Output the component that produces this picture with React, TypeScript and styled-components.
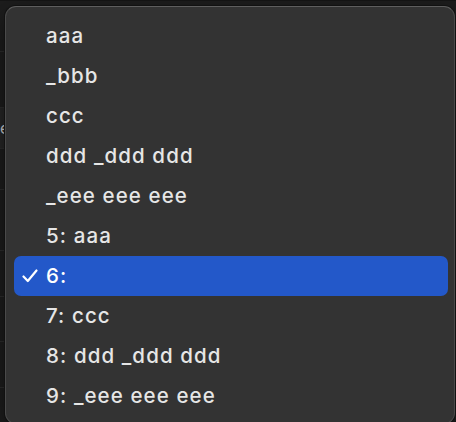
import styled, { createGlobalStyle } from "styled-components";

const GlobalStyle = createGlobalStyle`
  html, body {
    margin: 0;
    padding: 0;
    background: #1d1d1d;
  }
  body {
    font-family: Inter, "Noto Sans", "Liberation Sans", sans-serif;
  }
`;

const Screen = styled.div`
  position: relative;
  width: 456px;
  height: 422px;
  overflow: hidden;
  background: #1d1d1d;
`;

// the window behind the popup, only a sliver shows on the left
const Backdrop = styled.div`
  display: flex;
  flex-direction: column;
  width: 100%;
  height: 100%;
  padding-top: 14px;
  box-sizing: border-box;
  border-top: 1px solid #151515;
`;
const BackRow = styled.div<{ $h: number; $light?: boolean }>`
  height: ${(p) => p.$h}px;
  border-bottom: 1px solid #2c2c2c;
  background: ${(p) => (p.$light ? "#262626" : "transparent")};
  color: #cfcfcf;
  font-size: 16px;
  line-height: ${(p) => p.$h}px;
`;

const Menu = styled.div`
  position: absolute;
  left: 5px;
  top: 6px;
  width: 450px;
  height: 418px;
  box-sizing: border-box;
  padding: 9px 6px 0 8px;
  background: #333333;
  border: 1px solid #4a4a4a;
  border-top-color: #5e5e5e;
  border-radius: 11px;
  box-shadow: 0 0 0 1px #111, 0 8px 24px rgba(0, 0, 0, 0.5);
  display: flex;
  flex-direction: column;
`;

const Item = styled.div<{ $selected?: boolean }>`
  position: relative;
  height: 40px;
  display: flex;
  align-items: center;
  padding-left: 32px;
  padding-bottom: 1px;
  box-sizing: border-box;
  border-radius: 7px;
  background: ${(p) => (p.$selected ? "#2358c9" : "transparent")};
  color: ${(p) => (p.$selected ? "#ffffff" : "#e6e6e6")};
  font-size: 20.5px;
  font-weight: 500;
  letter-spacing: 1.1px;
  white-space: pre;
`;

const Check = styled.svg`
  position: absolute;
  left: 8px;
  top: 13px;
  width: 16px;
  height: 14px;
`;

const items = [
  "aaa",
  "_bbb",
  "ccc",
  "ddd _ddd ddd",
  "_eee eee eee",
  "5: aaa",
  "6:",
  "7: ccc",
  "8: ddd _ddd ddd",
  "9: _eee eee eee",
];

export default function App() {
  const selected = 6;
  return (
    <>
      <GlobalStyle />
      <Screen>
        <Backdrop>
          <BackRow $h={36} />
          <BackRow $h={55} />
          <BackRow $h={40} $light>
            e
          </BackRow>
          <BackRow $h={40} />
          <BackRow $h={60} />
          <BackRow $h={45} />
          <BackRow $h={44} />
          <BackRow $h={45} />
        </Backdrop>
        <Menu>
          {items.map((label, i) => (
            <Item key={i} $selected={i === selected}>
              {i === selected ? (
                <Check viewBox="0 0 16 14">
                  <path
                    d="M1.5 7.5 L5.8 12 L14.5 1.5"
                    fill="none"
                    stroke="#fff"
                    strokeWidth="2.2"
                    strokeLinecap="round"
                    strokeLinejoin="round"
                  />
                </Check>
              ) : null}
              {label}
            </Item>
          ))}
        </Menu>
      </Screen>
    </>
  );
}
